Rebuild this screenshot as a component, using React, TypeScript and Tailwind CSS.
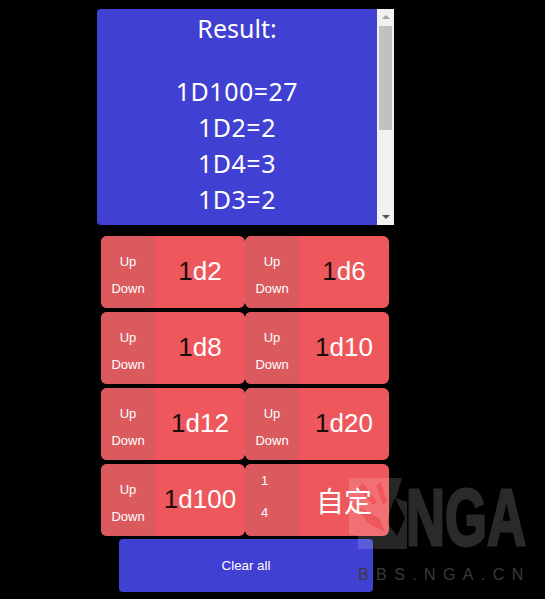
import * as React from "react";

const dice = ["1d2", "1d6", "1d8", "1d10", "1d12", "1d20", "1d100"];
const results = ["1D100=27", "1D2=2", "1D4=3", "1D3=2"];

function Card({ top, bottom, children }: { top: string; bottom: string; children: React.ReactNode }) {
  return (
    <div className="flex h-[72px] w-[144px] overflow-hidden rounded-[6px] bg-[#ee585c] text-white">
      <div className="flex w-[54px] shrink-0 flex-col items-center bg-[#db5a5e] pt-[12px] text-[13px] leading-[27px]">
        <span>{top}</span>
        <span>{bottom}</span>
      </div>
      <div className="flex flex-1 items-center justify-center pb-[2px] text-[26px]">{children}</div>
    </div>
  );
}

function Watermark() {
  return (
    <div className="pointer-events-none absolute left-[349px] top-[478px] h-[110px] w-[180px]">
      <svg className="absolute left-0 top-0" width="60" height="73" viewBox="0 0 60 73">
        <path
          fill="#ffffff"
          fillOpacity="0.15"
          fillRule="evenodd"
          d="M0 0H53L47 20L58 24V71H9V57H0ZM14 5L28 24L24 27L9 10ZM4 26L30 40L36 54L20 46ZM32 4L38 24L34 27L27 7ZM46 20L56 40L48 58L38 44L42 30Z"
        />
      </svg>
      <span className="absolute left-[57px] top-[0px] origin-left scale-x-[0.675] font-['Liberation_Sans',sans-serif] text-[80px] font-bold leading-[80px] text-[#2a2a2a] [-webkit-text-stroke:3px_#2a2a2a]">
        NGA
      </span>
      <span className="absolute left-[9px] top-[87px] font-['Liberation_Sans',sans-serif] text-[16px] leading-[20px] tracking-[7.4px] text-[#3a3a3a]">
        BBS.NGA.CN
      </span>
    </div>
  );
}

export default function App() {
  return (
    <div className="relative h-[599px] w-[545px] overflow-hidden bg-black font-['Liberation_Sans',sans-serif]">
      <div className="flex w-[491px] flex-col items-center pt-[9px]">
        <div className="flex h-[216px] w-[297px] overflow-hidden rounded-l-[4px]">
          <div className="flex-1 bg-[#4040d2] text-center font-['Noto_Sans',sans-serif] text-[25px] leading-[36px] text-white">
            <div className="mb-[27px] mt-[1px]">Result:</div>
            {results.map((r, i) => (
              <div key={i} className="tracking-[0.5px]">
                {r}
              </div>
            ))}
          </div>
          <div className="flex w-[17px] flex-col items-center bg-[#f1f1f1]">
            <div className="mt-[6px] h-0 w-0 border-x-[4px] border-b-[4px] border-x-transparent border-b-[#a3a3a3]" />
            <div className="mt-[7px] h-[104px] w-[13px] bg-[#c1c1c1]" />
            <div className="mb-[6px] mt-auto h-0 w-0 border-x-[4px] border-t-[4px] border-x-transparent border-t-[#505050]" />
          </div>
        </div>

        <div className="ml-[-1px] mt-[11px] grid w-[288px] grid-cols-2 gap-y-[4px]">
          {dice.map((d) => (
            <Card key={d} top="Up" bottom="Down">
              <span className="text-[#1c0c0c]">1</span>
              {d.slice(1)}
            </Card>
          ))}
          <div className="flex h-[72px] w-[144px] overflow-hidden rounded-[6px] bg-[#ee585c] text-white">
            <div className="flex w-[54px] shrink-0 flex-col items-start gap-[16px] bg-[#db5a5e] pl-[16px] pt-[5px] text-[13px] leading-[15px]">
              <span className="mt-[4px]">1</span>
              <span className="mt-[1px]">4</span>
            </div>
            <div className="flex flex-1 items-center justify-center font-['Noto_Sans_CJK_SC',sans-serif] text-[28px]">
              自定
            </div>
          </div>
        </div>

        <div className="ml-[1px] mt-[3px] flex h-[53px] w-[254px] items-center justify-center rounded-[4px] bg-[#4040d2] text-[13.33px] text-white">
          Clear all
        </div>
      </div>
      <Watermark />
    </div>
  );
}
